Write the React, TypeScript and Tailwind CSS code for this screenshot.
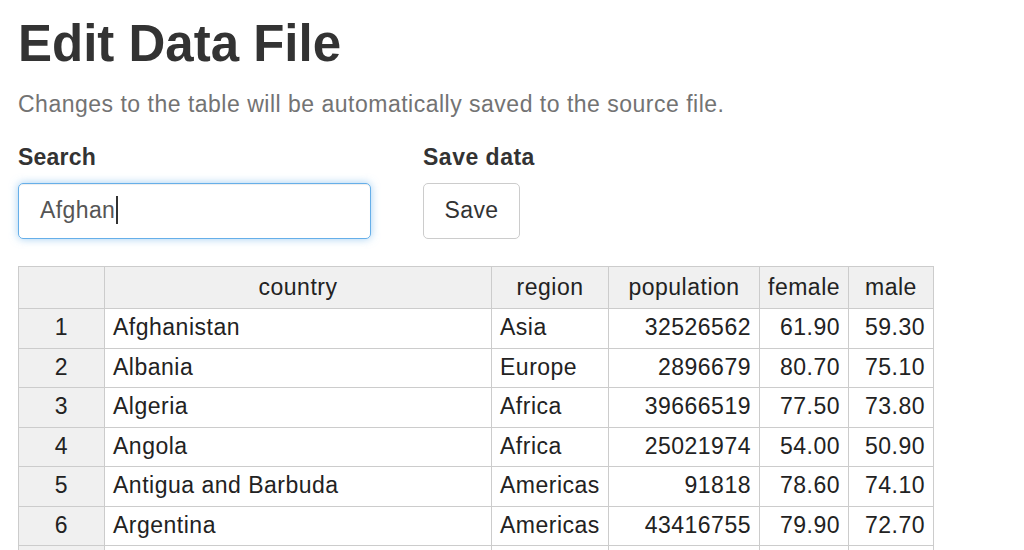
import React from 'react';

interface Row {
  country: string;
  region: string;
  population: number;
  female: string;
  male: string;
}

const rows: Row[] = [
  { country: 'Afghanistan', region: 'Asia', population: 32526562, female: '61.90', male: '59.30' },
  { country: 'Albania', region: 'Europe', population: 2896679, female: '80.70', male: '75.10' },
  { country: 'Algeria', region: 'Africa', population: 39666519, female: '77.50', male: '73.80' },
  { country: 'Angola', region: 'Africa', population: 25021974, female: '54.00', male: '50.90' },
  { country: 'Antigua and Barbuda', region: 'Americas', population: 91818, female: '78.60', male: '74.10' },
  { country: 'Argentina', region: 'Americas', population: 43416755, female: '79.90', male: '72.70' },
  { country: 'Armenia', region: 'Asia', population: 3017712, female: '77.80', male: '71.20' },
];

const th = 'border border-[#ccc] bg-[#f0f0f0] font-normal text-center px-[8px]';
const td = 'border border-[#ccc] px-[8px] pb-[2px] whitespace-nowrap';

const App: React.FC = () => {
  return (
    <div className="min-h-screen bg-white px-[18px] pt-[18px] text-[#333] font-['Liberation_Sans',Arial,sans-serif]">
      <h1 className="text-[51px] font-bold leading-none">Edit Data File</h1>
      <p className="mt-[24px] text-[23px] leading-none tracking-[0.5px] text-[#737373]">
        Changes to the table will be automatically saved to the source file.
      </p>

      <div className="mt-[30px] flex gap-[52px]">
        <div className="flex flex-col">
          <label className="text-[23px] font-bold leading-none tracking-[0.2px]">Search</label>
          <div className="mt-[14px] flex h-[56px] w-[353px] items-center rounded-[5px] border border-[#66afe9] pl-[21px] pb-[2px] text-[23px] tracking-[0.4px] text-[#555] shadow-[inset_0_1px_1px_rgba(0,0,0,0.075),0_0_8px_rgba(102,175,233,0.6)]">
            <span>Afghan</span>
            <span className="ml-[1px] h-[28px] w-[1.5px] bg-[#333]" />
          </div>
        </div>
        <div className="flex flex-col">
          <label className="text-[23px] font-bold leading-none tracking-[0.5px]">Save data</label>
          <button className="mt-[14px] flex h-[56px] w-[97px] items-center justify-center rounded-[5px] border border-[#ccc] bg-white pb-[2px] text-[23px] tracking-[0.4px] text-[#333]">
            Save
          </button>
        </div>
      </div>

      <table className="mt-[27px] w-[915px] table-fixed border-collapse text-[23px] tracking-[0.5px] text-[#222]">
        <colgroup>
          <col className="w-[86px]" />
          <col className="w-[387px]" />
          <col className="w-[117px]" />
          <col className="w-[151px]" />
          <col className="w-[89px]" />
          <col className="w-[85px]" />
        </colgroup>
        <thead>
          <tr className="h-[42px]">
            <th className={th}></th>
            <th className={th}>country</th>
            <th className={th}>region</th>
            <th className={th}>population</th>
            <th className={th}>female</th>
            <th className={th}>male</th>
          </tr>
        </thead>
        <tbody>
          {rows.map((r, i) => (
            <tr key={i} className="h-[39.5px]">
              <td className={`${td} bg-[#f0f0f0] text-center`}>{i + 1}</td>
              <td className={td}>{r.country}</td>
              <td className={td}>{r.region}</td>
              <td className={`${td} text-right`}>{r.population}</td>
              <td className={`${td} text-right`}>{r.female}</td>
              <td className={`${td} text-right`}>{r.male}</td>
            </tr>
          ))}
        </tbody>
      </table>
    </div>
  );
};

export default App;
